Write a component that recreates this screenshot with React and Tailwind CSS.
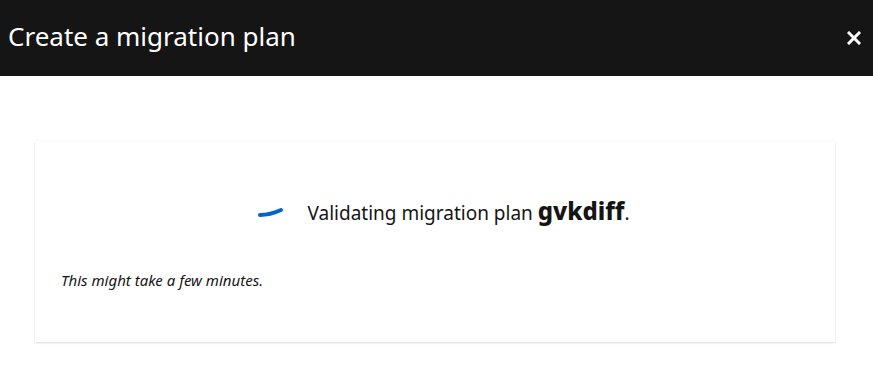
import React from 'react';

export default function App() {
  return (
    <div className="w-[873px] h-[369px] bg-white overflow-hidden" style={{ fontFamily: '"Noto Sans", "Liberation Sans", sans-serif' }}>
      <div className="h-[76px] bg-[#151515] flex items-center justify-between pl-2 pr-3">
        <h1 className="text-white text-[26px] leading-none -mt-1">Create a migration plan</h1>
        <button className="text-white" aria-label="Close">
          <svg width="14" height="14" viewBox="0 0 14 14">
            <path d="M2 2 L12 12 M12 2 L2 12" stroke="white" strokeWidth="3" strokeLinecap="square" />
          </svg>
        </button>
      </div>
      <div className="pt-[65px] pl-[35px]">
        <div className="w-[800px] h-[201px] bg-white shadow-[0_1px_2px_rgba(0,0,0,0.12),0_0_2px_rgba(0,0,0,0.06)] flex flex-col">
          <div className="flex items-center justify-center gap-[23px] pt-[52px] pl-[18px]">
            <svg width="26" height="14" viewBox="0 0 26 14">
              <path d="M2 11 Q12 11 23 6" stroke="#0066cc" strokeWidth="4" fill="none" strokeLinecap="round" />
            </svg>
            <p className="text-[#151515] text-[19px]">
              Validating migration plan <strong className="text-[24px] font-extrabold">gvkdiff</strong>.
            </p>
          </div>
          <p className="italic text-[#151515] text-[15px] pl-[26px] mt-[40px]">This might take a few minutes.</p>
        </div>
      </div>
    </div>
  );
}
